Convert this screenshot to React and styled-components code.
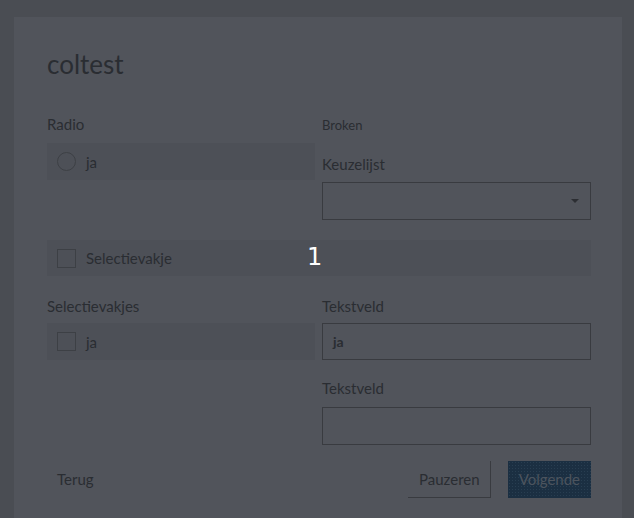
import React from 'react';
import styled, { createGlobalStyle } from 'styled-components';

const GlobalStyle = createGlobalStyle`
  html, body {
    margin: 0;
    padding: 0;
    background: #4a4d53;
    font-family: Lato, "Liberation Sans", sans-serif;
    color: #2a2d32;
    overflow: hidden;
  }
`;

const Page = styled.div`
  position: relative;
  min-height: 518px;
  padding: 17px 12px 0 14px;
  box-sizing: border-box;
`;

const Panel = styled.div`
  background: #51545b;
  min-height: 501px;
  padding: 31px 31px 20px 33px;
  box-sizing: border-box;
`;

const Title = styled.h1`
  margin: 0;
  font-size: 26px;
  line-height: 32px;
  font-weight: 400;
`;

const Row = styled.div`
  display: grid;
  grid-template-columns: 268px 269px;
  column-gap: 7px;
  align-items: start;
  margin-top: ${({ $top }) => $top}px;
`;

const Column = styled.div`
  display: flex;
  flex-direction: column;
`;

const Label = styled.div`
  font-size: 15px;
  line-height: 20px;
  margin-top: ${({ $top }) => $top || 0}px;
  margin-bottom: ${({ $bottom }) => $bottom || 8}px;
`;

const Small = styled.div`
  font-size: 13px;
  line-height: 16px;
  margin-top: 3px;
`;

const OptionBox = styled.div`
  display: flex;
  align-items: center;
  gap: 10px;
  height: ${({ $tall }) => $tall || 37}px;
  padding: 0 10px;
  background: #4d5057;
  font-size: 15px;
  margin-top: ${({ $top }) => $top || 0}px;
`;

const Radio = styled.span`
  width: 17px;
  height: 17px;
  border: 1px solid #3d4045;
  border-radius: 50%;
  flex: none;
`;

const Check = styled.span`
  width: 17px;
  height: 17px;
  border: 1px solid #3d4045;
  flex: none;
`;

const Field = styled.div`
  display: flex;
  align-items: center;
  justify-content: space-between;
  height: ${({ $tall }) => $tall || 37}px;
  box-sizing: border-box;
  border: 1px solid #393b40;
  padding: 0 10px;
  font-size: 14px;
  font-weight: 700;
`;

const Caret = styled.span`
  width: 0;
  height: 0;
  border-left: 4px solid transparent;
  border-right: 4px solid transparent;
  border-top: 4px solid #2c2e33;
  margin-right: 1px;
`;

const Footer = styled.div`
  display: flex;
  justify-content: space-between;
  align-items: center;
  margin-top: 16px;
`;

const ButtonGroup = styled.div`
  display: flex;
  gap: 17px;
`;

const Button = styled.button`
  appearance: none;
  height: 37px;
  padding: 0 10px 2px;
  box-sizing: border-box;
  font-family: inherit;
  font-size: 15px;
  background-color: transparent;
  color: #2a2d32;
  border: none;
  border-radius: 0;
`;

const PauseButton = styled(Button)`
  border-right: 1px solid #393b40;
  border-bottom: 1px solid #393b40;
  padding: 0 10px 1px 11px;
`;

const NextButton = styled(Button)`
  background-color: #1b2f42;
  background-image: radial-gradient(circle, rgba(80, 110, 130, 0.25) 0.5px, transparent 0.8px);
  background-size: 3px 3px;
  color: #4c545e;
  padding: 0 11px 2px;
`;

const Marker = styled.div`
  position: absolute;
  left: 307px;
  top: 242px;
  font-family: "DejaVu Sans", sans-serif;
  font-size: 24px;
  line-height: 30px;
  color: #ffffff;
`;

export default function App() {
  return (
    <>
      <GlobalStyle />
      <Page>
        <Panel>
          <Title>coltest</Title>
          <Row $top={34}>
            <Column>
              <Label $bottom={9}>Radio</Label>
              <OptionBox>
                <Radio />
                ja
              </OptionBox>
            </Column>
            <Column>
              <Small>Broken</Small>
              <Label $top={21} $bottom={8}>Keuzelijst</Label>
              <Field $tall={38}>
                <span />
                <Caret />
              </Field>
            </Column>
          </Row>
          <OptionBox $top={20} $tall={36}>
            <Check />
            Selectievakje
          </OptionBox>
          <Row $top={20}>
            <Column>
              <Label $bottom={7}>Selectievakjes</Label>
              <OptionBox>
                <Check />
                ja
              </OptionBox>
            </Column>
            <Column>
              <Label $bottom={7}>Tekstveld</Label>
              <Field>ja</Field>
              <Label $top={18} $bottom={9}>Tekstveld</Label>
              <Field $tall={38} />
            </Column>
          </Row>
          <Footer>
            <Button>Terug</Button>
            <ButtonGroup>
              <PauseButton>Pauzeren</PauseButton>
              <NextButton>Volgende</NextButton>
            </ButtonGroup>
          </Footer>
        </Panel>
        <Marker>1</Marker>
      </Page>
    </>
  );
}
